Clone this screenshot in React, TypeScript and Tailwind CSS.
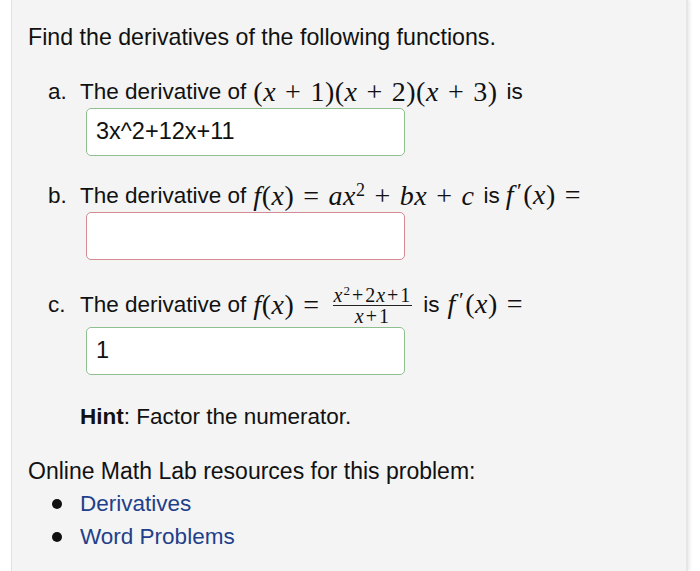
import React from "react";

const M: React.FC<{ children: React.ReactNode; className?: string }> = ({ children, className }) => (
  <span className={"[font-family:'Liberation_Serif',serif] text-[28px] leading-[30px] tracking-[0.5px] whitespace-nowrap " + (className ?? "")}>{children}</span>
);
const I: React.FC<{ children: React.ReactNode }> = ({ children }) => <span className="italic">{children}</span>;
const Op: React.FC<{ children: React.ReactNode }> = ({ children }) => <span className="mx-[9px]">{children}</span>;
const FP: React.FC = () => (
  <>
    <I>f</I><span className="ml-[3px] mr-[1px] text-[22px] relative top-[-6px]">′</span>(<I>x</I>)<Op>=</Op>
  </>
);

export default function App() {
  return (
    <div className="w-[700px] h-[571px] bg-white overflow-hidden [font-family:'Liberation_Sans',Arial,sans-serif] text-[22.5px] text-[#111]">
      <div className="ml-[11px] w-[677px] h-full bg-[#f4f4f4] border-l border-[#e2e2e2] border-r-2 border-r-[#e6e6e6] shadow-[2px_0_3px_rgba(0,0,0,0.08)] pl-[16px] pt-[22px]">
        <div className="leading-[30px] text-[23.2px]">Find the derivatives of the following functions.</div>

        <div className="mt-[25px] flex items-center h-[30px]">
          <span className="ml-[20px] w-[32px]">a.</span>
          <span>The derivative of</span>
          <M className="ml-[7px]">
            (<I>x</I><Op>+</Op>1)(<I>x</I><Op>+</Op>2)(<I>x</I><Op>+</Op>3)
          </M>
          <span className="ml-[9px]">is</span>
        </div>
        <div className="ml-[58px] mt-[1px] w-[319px] h-[48px] bg-white border border-[#8fbf8f] rounded-[5px] flex items-center pl-[9px] text-[23.5px]">
          3x^2+12x+11
        </div>

        <div className="mt-[25px] flex items-center h-[30px]">
          <span className="ml-[20px] w-[32px]">b.</span>
          <span>The derivative of</span>
          <M className="ml-[7px]">
            <I>f</I>(<I>x</I>)<Op>=</Op><I>ax</I><sup className="text-[18px]">2</sup><Op>+</Op><I>bx</I><Op>+</Op><I>c</I>
          </M>
          <span className="ml-[9px]">is</span>
          <M className="ml-[6px]">
            <FP />
          </M>
        </div>
        <div className="ml-[58px] mt-[1px] w-[319px] h-[48px] bg-white border border-[#d48a92] rounded-[5px]" />

        <div className="mt-[23px] flex items-center h-[44px]">
          <span className="ml-[20px] w-[32px]">c.</span>
          <span>The derivative of</span>
          <M className="ml-[7px]">
            <I>f</I>(<I>x</I>)<Op>=</Op>
          </M>
          <span className="ml-[4px] inline-flex flex-col items-center [font-family:'Liberation_Serif',serif] text-[20px] leading-[20px] tracking-[1px] whitespace-nowrap">
            <span className="px-[1px]">
              <I>x</I><sup className="text-[13px]">2</sup><span className="mx-[1px]">+</span>2<I>x</I><span className="mx-[1px]">+</span>1
            </span>
            <span className="w-full border-t border-[#222]"></span>
            <span><I>x</I><span className="mx-[1px]">+</span>1</span>
          </span>
          <span className="ml-[11px]">is</span>
          <M className="ml-[8px]">
            <FP />
          </M>
        </div>
        <div className="ml-[58px] mt-0 w-[319px] h-[48px] bg-white border border-[#8fbf8f] rounded-[5px] flex items-center pl-[9px] text-[23.5px]">
          1
        </div>

        <div className="ml-[52px] mt-[30px] leading-[24px]">
          <span className="font-bold">Hint</span>: Factor the numerator.
        </div>

        <div className="mt-[30px] leading-[24px] text-[23px]">Online Math Lab resources for this problem:</div>
        <ul className="mt-[4px]">
          <li className="flex items-center h-[33px]">
            <span className="ml-[24px] w-[10px] h-[10px] rounded-full bg-[#111]"></span>
            <span className="ml-[18px] text-[#1f3f8a]">Derivatives</span>
          </li>
          <li className="flex items-center h-[33px]">
            <span className="ml-[24px] w-[10px] h-[10px] rounded-full bg-[#111]"></span>
            <span className="ml-[18px] text-[#1f3f8a]">Word Problems</span>
          </li>
        </ul>
      </div>
    </div>
  );
}
